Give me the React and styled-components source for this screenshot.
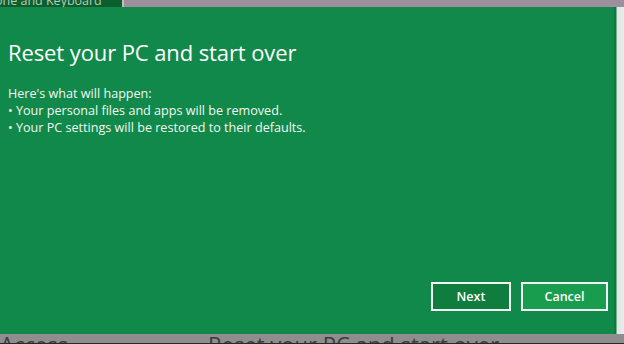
import React from 'react';
import styled, { createGlobalStyle } from 'styled-components';

const GlobalStyle = createGlobalStyle`
  html, body {
    margin: 0;
    padding: 0;
    width: 624px;
    height: 344px;
    overflow: hidden;
    background: #8f8f8f;
  }
  #root {
    width: 624px;
    height: 344px;
  }
`;

const Screen = styled.div`
  width: 624px;
  height: 344px;
  display: grid;
  grid-template-rows: 7px 1fr 10px;
  grid-template-columns: 614px 1fr;
  font-family: "Segoe UI", "Open Sans", "Noto Sans", sans-serif;
  overflow: hidden;
`;

const TopBar = styled.div`
  grid-column: 1 / 3;
  display: flex;
  background: #9b909b;
  overflow: hidden;
`;

const Tab = styled.div`
  width: 122px;
  background: #0c5f2c;
  color: #b8c9bc;
  font-size: 12.5px;
  line-height: 1;
  display: flex;
  align-items: flex-end;
  overflow: hidden;
  white-space: nowrap;
  border-right: 2px solid #c9b8c6;
  span {
    margin-left: -5px;
  }
`;

const Panel = styled.section`
  background: #11894a;
  color: #ffffff;
  display: flex;
  flex-direction: column;
  padding: 30px 6px 23px 8px;
  box-sizing: border-box;
`;

const EdgeStrip = styled.div`
  background: linear-gradient(90deg, #0e7a40 0px, #0e7a40 2px, #dfe8e2 3px, #eceaec 100%);
`;

const Title = styled.h1`
  margin: 0;
  font-weight: 400;
  font-size: 22px;
  line-height: 30px;
  letter-spacing: -0.1px;
  color: #ffffff;
`;

const Body = styled.div`
  margin-top: 18px;
  font-size: 12.6px;
  line-height: 17px;
  color: #f2f7f3;
`;

const Line = styled.div`
  white-space: nowrap;
`;

const Actions = styled.div`
  margin-top: auto;
  display: flex;
  justify-content: flex-end;
  gap: 10px;
`;

const Button = styled.button`
  height: 29px;
  width: ${p => p.$w}px;
  box-sizing: border-box;
  border: 2px solid #f3f7f4;
  background: ${p => (p.$primary ? '#0e7d3e' : '#189c4e')};
  color: #ffffff;
  font-family: inherit;
  font-weight: 600;
  font-size: 12.5px;
  padding: 0;
  cursor: pointer;
`;

const BottomBar = styled.div`
  grid-column: 1 / 3;
  background: #8e8e8e;
  border-bottom: 1px solid #2a2a2a;
  position: relative;
  overflow: hidden;
  color: #3c3c3c;
  line-height: 1;
`;

const Ghost = styled.span`
  position: absolute;
  top: -1px;
  left: ${p => p.$x}px;
  font-size: ${p => p.$size}px;
  white-space: nowrap;
`;

export default function App() {
  return (
    <>
      <GlobalStyle />
      <Screen>
        <TopBar>
          <Tab><span>one and Keyboard</span></Tab>
        </TopBar>
        <Panel>
          <Title>Reset your PC and start over</Title>
          <Body>
            <Line>Here's what will happen:</Line>
            <Line>• Your personal files and apps will be removed.</Line>
            <Line>• Your PC settings will be restored to their defaults.</Line>
          </Body>
          <Actions>
            <Button $primary $w={80}>Next</Button>
            <Button $w={87}>Cancel</Button>
          </Actions>
        </Panel>
        <EdgeStrip />
        <BottomBar>
          <Ghost $x={0} $size={22}>Access</Ghost>
          <Ghost $x={208} $size={22}>Reset your PC and start over</Ghost>
        </BottomBar>
      </Screen>
    </>
  );
}
